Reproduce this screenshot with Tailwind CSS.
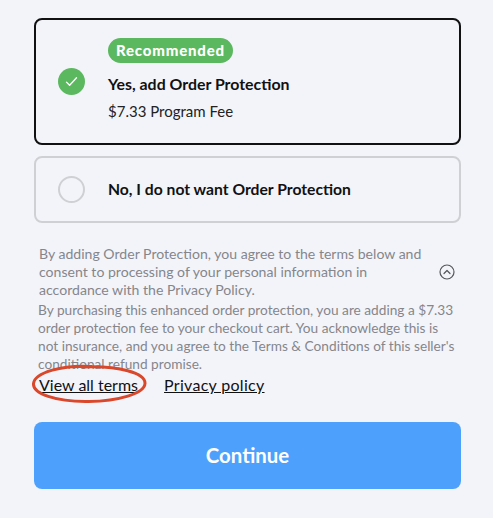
<!DOCTYPE html>
<html lang="en">
<head>
  <meta charset="UTF-8">
  <title>Order Protection</title>
  <script src="https://cdn.jsdelivr.net/npm/@tailwindcss/browser@4"></script>
</head>
<body class="bg-[#f3f4fa] font-['Lato',sans-serif] w-[493px] h-[518px] overflow-hidden">
  <div class="w-[427px] ml-[34px] pt-[18px]">
    <!-- yes option -->
    <div class="h-[127px] border-2 border-[#111] rounded-[8px] flex items-center pl-[22px]">
      <div class="w-[27px] h-[27px] rounded-full bg-[#5cb85f] flex items-center justify-center shrink-0">
        <svg class="w-[15px] h-[15px]" viewBox="0 0 24 24" fill="none" stroke="#fff" stroke-width="2.2" stroke-linecap="round" stroke-linejoin="round">
          <path d="M4 13l5 5L20 6" />
        </svg>
      </div>
      <div class="ml-[23px] pb-[2px]">
        <div class="w-fit h-[25px] px-[8px] rounded-full bg-[#5cb85f] text-white text-[15px] tracking-[0.8px] font-black leading-[24px]">Recommended</div>
        <div class="mt-[9px] text-[15.9px] font-bold leading-[24px] text-[#111]">Yes, add Order Protection</div>
        <div class="mt-[3px] text-[15px] leading-[24px] text-[#222]">$7.33 Program Fee</div>
      </div>
    </div>
    <!-- no option -->
    <div class="mt-[11px] h-[67px] border-2 border-[#cfd0d4] rounded-[8px] flex items-center pl-[22px]">
      <div class="w-[27px] h-[27px] rounded-full border-2 border-[#cfd0d4] shrink-0"></div>
      <div class="ml-[23px] text-[15.7px] font-bold text-[#111]">No, I do not want Order Protection</div>
    </div>
    <!-- terms -->
    <div class="mt-[22px] pl-[5px] flex items-center">
      <p class="w-[393px] text-[14.08px] leading-[18px] text-[#85868b]">By adding Order Protection, you agree to the terms below and consent to processing of your personal information in accordance with the Privacy Policy.</p>
      <svg class="ml-[7px] w-[16px] h-[16px]" viewBox="0 0 16 16" fill="none" stroke="#55565a" stroke-width="1.2" stroke-linecap="round" stroke-linejoin="round">
        <circle cx="8" cy="8" r="7" />
        <path d="M5 9.5L8 6.5l3 3" />
      </svg>
    </div>
    <p class="mt-[2px] pl-[4px] w-[425px] text-[13.68px] leading-[18px] text-[#85868b]">By purchasing this enhanced order protection, you are adding a $7.33 order protection fee to your checkout cart. You acknowledge this is not insurance, and you agree to the Terms &amp; Conditions of this seller's conditional refund promise.</p>
    <div class="relative pl-[5px] flex gap-[26px] text-[16px] leading-[24px] text-[#111] underline">
      <span>View all terms</span>
      <span class="tracking-[0.3px]">Privacy policy</span>
      <svg class="absolute left-[-3px] top-[-9px] w-[116px] h-[40px]" viewBox="0 0 116 40" fill="none">
        <path d="M60 2.500C32 1 4 8 2.500 19.500c-1 10 22 18.500 55 18 30-.5 56-8 56.500-18C114.500 9 88 1.500 52 3" stroke="#d9482b" stroke-width="3" stroke-linecap="round" />
      </svg>
    </div>
    <button class="mt-[25px] w-full h-[67px] rounded-[8px] bg-[#4da1fd] text-white text-[20.4px] font-bold">Continue</button>
  </div>
</body>
</html>
